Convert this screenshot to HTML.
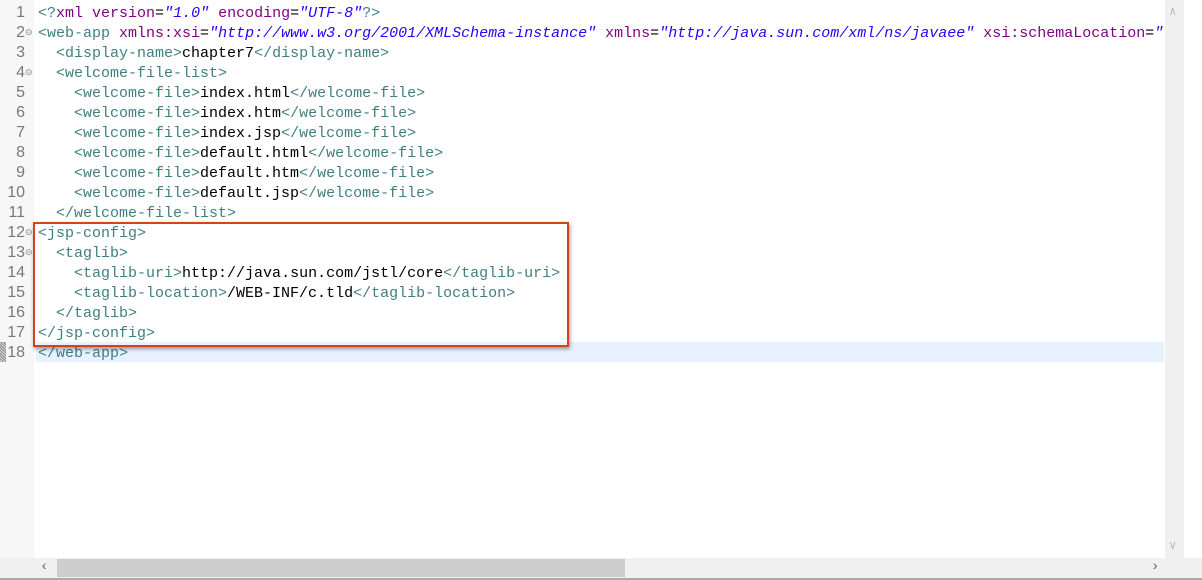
<!DOCTYPE html>
<html><head><meta charset="utf-8"><style>
body{margin:0;width:1202px;height:580px;background:#fff;position:relative;overflow:hidden;font-family:"Liberation Mono",monospace;font-size:15px}
.gut{position:absolute;left:0;top:0;width:34px;height:558px;background:#f7f7f7}
.code{position:absolute;left:38px;top:4px;white-space:pre;line-height:20px;width:1126px;overflow:hidden}
.t{color:#3f7f7f}.a{color:#7f007f}.v{color:#2a00ff;font-style:italic}.x{color:#000}
.hl{position:absolute;left:36px;top:342px;width:1128px;height:20px;background:#e8f2fe}
.box{position:absolute;left:33px;top:222px;width:532px;height:121px;border:2px solid #d2441c;box-shadow:1px 2px 4px rgba(0,0,0,.4)}
.vs{position:absolute;left:1165px;top:0;width:19px;height:558px;background:#f0f0f0}
.hs{position:absolute;left:0;top:558px;width:1202px;height:20px;background:#f0f0f0}
.th{position:absolute;left:57px;top:559px;width:568px;height:18px;background:#cdcdcd}
.fold{position:absolute;font-size:9px;color:#888;font-family:"DejaVu Sans",sans-serif}
.nums{position:absolute;left:0;top:3px;width:25px;text-align:right;line-height:20px;font-family:'Liberation Sans',sans-serif;color:#787878;font-size:16px;white-space:pre}
</style></head><body>
<div class="gut"></div>
<div class="hl"></div>
<div class="vs"></div>
<div class="hs"></div><div class="th"></div>
<div style="position:absolute;left:40px;top:559px;color:#666;font-size:14px">&#x2039;</div>
<div style="position:absolute;left:1151px;top:559px;color:#666;font-size:14px">&#x203A;</div>
<div style="position:absolute;left:1169px;top:4px;color:#bbb;font-size:12px">&#x2227;</div>
<div style="position:absolute;left:1169px;top:538px;color:#bbb;font-size:12px">&#x2228;</div>
<div style="position:absolute;left:0;top:578px;width:1202px;height:2px;background:#aaa"></div>
<div style="position:absolute;left:0;top:342px;width:6px;height:20px;background:repeating-linear-gradient(45deg,#888 0 1px,#ddd 1px 2px)"></div>
<div class="nums">1
2
3
4
5
6
7
8
9
10
11
12
13
14
15
16
17
18</div>
<div class="fold" style="left:25px;top:28px">&#x229D;</div>
<div class="fold" style="left:25px;top:68px">&#x229D;</div>
<div class="fold" style="left:25px;top:228px">&#x229D;</div>
<div class="fold" style="left:25px;top:248px">&#x229D;</div>
<div class="code"><span class="t">&lt;?</span><span class="a">xml version</span><span class="x">=</span><span class="v">"1.0"</span> <span class="a">encoding</span><span class="x">=</span><span class="v">"UTF-8"</span><span class="t">?&gt;</span>
<span class="t">&lt;web-app</span> <span class="a">xmlns:xsi</span>=<span class="v">"http://www.w3.org/2001/XMLSchema-instance"</span> <span class="a">xmlns</span>=<span class="v">"http://java.sun.com/xml/ns/javaee"</span> <span class="a">xsi:schemaLocation</span>=<span class="v">"http</span>
  <span class="t">&lt;display-name&gt;</span>chapter7<span class="t">&lt;/display-name&gt;</span>
  <span class="t">&lt;welcome-file-list&gt;</span>
    <span class="t">&lt;welcome-file&gt;</span>index.html<span class="t">&lt;/welcome-file&gt;</span>
    <span class="t">&lt;welcome-file&gt;</span>index.htm<span class="t">&lt;/welcome-file&gt;</span>
    <span class="t">&lt;welcome-file&gt;</span>index.jsp<span class="t">&lt;/welcome-file&gt;</span>
    <span class="t">&lt;welcome-file&gt;</span>default.html<span class="t">&lt;/welcome-file&gt;</span>
    <span class="t">&lt;welcome-file&gt;</span>default.htm<span class="t">&lt;/welcome-file&gt;</span>
    <span class="t">&lt;welcome-file&gt;</span>default.jsp<span class="t">&lt;/welcome-file&gt;</span>
  <span class="t">&lt;/welcome-file-list&gt;</span>
<span class="t">&lt;jsp-config&gt;</span>
  <span class="t">&lt;taglib&gt;</span>
    <span class="t">&lt;taglib-uri&gt;</span>http://java.sun.com/jstl/core<span class="t">&lt;/taglib-uri&gt;</span>
    <span class="t">&lt;taglib-location&gt;</span>/WEB-INF/c.tld<span class="t">&lt;/taglib-location&gt;</span>
  <span class="t">&lt;/taglib&gt;</span>
<span class="t">&lt;/jsp-config&gt;</span>
<span class="t">&lt;/web-app&gt;</span></div>
<div class="box"></div>
</body></html>
